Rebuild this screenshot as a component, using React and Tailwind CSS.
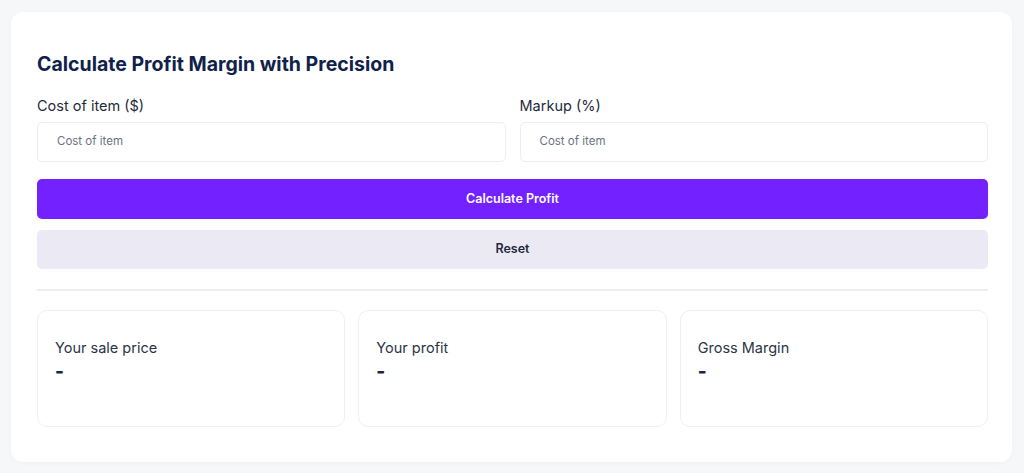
import React from "react";

function ResultCard({ label }) {
  return (
    <div className="flex h-[117px] flex-1 flex-col rounded-[10px] border border-[#eef0f3] bg-white px-[17px] pt-[27px]">
      <div className="text-[14.5px] leading-[20px] text-[#2a3547]">{label}</div>
      <div className="mt-[2px] text-[19px] font-extrabold leading-[24px] text-[#1a2540]">-</div>
    </div>
  );
}

export default function App() {
  return (
    <div
      className="h-[473px] w-[1024px] bg-[#f6f7f9] pl-[11px] pr-[12px] pt-[12px]"
      style={{ fontFamily: "Inter, 'Noto Sans', sans-serif" }}
    >
      <div className="flex h-[450px] flex-col rounded-[12px] bg-white pl-[26px] pr-[24px] pt-[40px] shadow-[0_1px_4px_rgba(0,0,0,0.03)]">
        <h1 className="text-[19.5px] font-bold leading-[24px] text-[#11224a]">
          Calculate Profit Margin with Precision
        </h1>
        <div className="mt-[20px] flex gap-[14px]">
          <div className="flex flex-1 flex-col">
            <label className="text-[14.5px] leading-[20px] text-[#1f2a3c]">Cost of item ($)</label>
            <div className="mt-[6px] flex h-[40px] items-center rounded-[5px] border border-[#eceef1] bg-white px-[19px] text-[11.5px] text-[#6b7280]">
              Cost of item
            </div>
          </div>
          <div className="flex flex-1 flex-col">
            <label className="text-[14.5px] leading-[20px] text-[#1f2a3c]">Markup (%)</label>
            <div className="mt-[6px] flex h-[40px] items-center rounded-[5px] border border-[#eceef1] bg-white px-[19px] text-[11.5px] text-[#6b7280]">
              Cost of item
            </div>
          </div>
        </div>
        <button className="mt-[17px] flex h-[40px] items-center justify-center rounded-[5px] bg-[#7321ff] text-[12.5px] font-semibold text-white">
          Calculate Profit
        </button>
        <button className="mt-[11px] flex h-[39px] items-center justify-center rounded-[5px] bg-[#ebe9f3] text-[12.5px] font-semibold text-[#1f2a3c]">
          Reset
        </button>
        <div className="mt-[20px] h-[2px] bg-[#eceef0]" />
        <div className="mt-[19px] flex gap-[13px]">
          <ResultCard label="Your sale price" />
          <ResultCard label="Your profit" />
          <ResultCard label="Gross Margin" />
        </div>
      </div>
    </div>
  );
}
